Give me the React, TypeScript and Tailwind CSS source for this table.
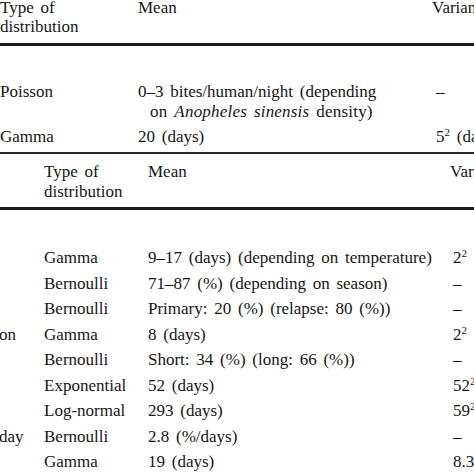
const serif = { fontFamily: '"Liberation Serif", "Times New Roman", serif', wordSpacing: '2.5px' };

type Row = { kind: string; lead?: string; mean: React.ReactNode; variance: React.ReactNode };

function Sq({ base }: { base: string }) {
  return (
    <span>
      {base}
      <sup className="relative -top-[6px] text-[11px]">2</sup>
    </span>
  );
}

const rows: Row[] = [
  { kind: 'Gamma', mean: '9–17 (days) (depending on temperature)', variance: <Sq base="2" /> },
  { kind: 'Bernoulli', mean: '71–87 (%) (depending on season)', variance: '–' },
  { kind: 'Bernoulli', mean: 'Primary: 20 (%) (relapse: 80 (%))', variance: '–' },
  { kind: 'Gamma', lead: 'on', mean: '8 (days)', variance: <Sq base="2" /> },
  { kind: 'Bernoulli', mean: 'Short: 34 (%) (long: 66 (%))', variance: '–' },
  { kind: 'Exponential', mean: '52 (days)', variance: <Sq base="52" /> },
  { kind: 'Log-normal', mean: '293 (days)', variance: <Sq base="59" /> },
  { kind: 'Bernoulli', lead: 'day', mean: '2.8 (%/days)', variance: '–' },
  { kind: 'Gamma', mean: '19 (days)', variance: '8.3' },
];

export default function App() {
  return (
    <div className="h-[474px] w-[474px] overflow-hidden bg-white text-[17px] text-[#161616]" style={serif}>
      {/* first table, top cut off */}
      <div className="-mt-[2px] grid h-[48px] grid-cols-[138px_294px_1fr] border-b-[3px] border-[#1a1a1a] leading-[19px]">
        <div>
          Type of
          <br />
          distribution
        </div>
        <div>Mean</div>
        <div className="whitespace-nowrap">Variance</div>
      </div>
      <div className="grid grid-cols-[138px_294px_1fr] pt-[36px] leading-[20px]">
        <div>Poisson</div>
        <div className="whitespace-nowrap">
          <div>0–3 bites/human/night (depending</div>
          <div className="pl-[12px] tracking-[0.2px]">
            on <i>Anopheles sinensis</i> density)
          </div>
        </div>
        <div className="pl-[4px]">–</div>
      </div>
      <div className="grid grid-cols-[138px_294px_1fr] border-b-2 border-[#2a2a2a] pt-[5px] pb-[5px] leading-[20px]">
        <div>Gamma</div>
        <div>20 (days)</div>
        <div className="whitespace-nowrap pl-[4px]">
          <Sq base="5" /> (days)
        </div>
      </div>

      {/* second table */}
      <div className="grid h-[56px] grid-cols-[44px_104px_302px_1fr] border-b-[3px] border-[#1a1a1a] pt-[8px] leading-[20px]">
        <div />
        <div className="whitespace-nowrap">
          Type of
          <br />
          distribution
        </div>
        <div>Mean</div>
        <div className="whitespace-nowrap">Variance</div>
      </div>
      <div className="pt-[35px] leading-[25.5px]">
        {rows.map((row, i) => (
          <div key={i} className="grid grid-cols-[44px_104px_302px_1fr] whitespace-nowrap">
            <div className="-ml-[1px]">{row.lead ?? ''}</div>
            <div>{row.kind}</div>
            <div>{row.mean}</div>
            <div className="pl-[3px]">{row.variance}</div>
          </div>
        ))}
      </div>
    </div>
  );
}
